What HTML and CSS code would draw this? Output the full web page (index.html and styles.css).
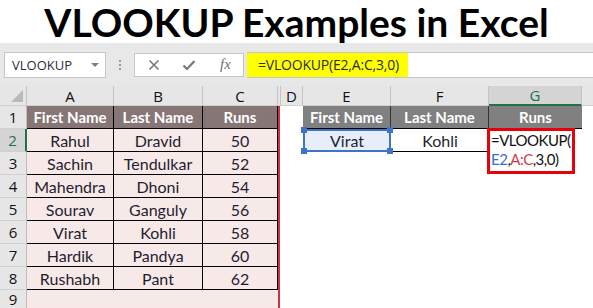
FILE: index.html
```html
<!DOCTYPE html>
<html lang="en">
<head>
    <meta charset="UTF-8">
    <title>VLOOKUP Examples in Excel</title>
    <link rel="stylesheet" href="styles.css">
</head>
<body>
    <h1 class="title">VLOOKUP Examples in Excel</h1>

    <!-- Formula bar -->
    <div class="formula-bar">
        <div class="namebox">
            <span class="namebox-text">VLOOKUP</span>
            <span class="namebox-arrow"></span>
        </div>
        <div class="grip"><span></span><span></span><span></span></div>
        <div class="fx-buttons">
            <svg class="fx-icon" width="12" height="12" viewBox="0 0 12 12">
                <path d="M1.5 1.5 L10.5 10.5 M10.5 1.5 L1.5 10.5" stroke="#777" stroke-width="1.6" fill="none"/>
            </svg>
            <svg class="fx-icon" width="14" height="12" viewBox="0 0 14 12">
                <path d="M1.5 6.5 L5 10 L12.5 2" stroke="#777" stroke-width="2.2" fill="none"/>
            </svg>
            <span class="fx-label">fx</span>
        </div>
        <div class="formula-input">
            <span class="formula-text">=VLOOKUP(E2,A:C,3,0)</span>
        </div>
    </div>

    <!-- Worksheet -->
    <div class="sheet">
        <div class="print-line"></div>
        <div class="blank"></div>

        <div class="ch corner"><span class="corner-tri"></span></div>
        <div class="ch">A</div>
        <div class="ch">B</div>
        <div class="ch">C</div>
        <div class="ch"></div>
        <div class="ch">D</div>
        <div class="ch">E</div>
        <div class="ch">F</div>
        <div class="ch active">G</div>
        <div class="ch end"></div>

        <div class="rh">1</div>
        <div class="cell th">First Name</div>
        <div class="cell th">Last Name</div>
        <div class="cell th">Runs</div>
        <div class="free"></div>
        <div class="cell th2">First Name</div>
        <div class="cell th2">Last Name</div>
        <div class="cell th2 last">Runs</div>
        <div class="free"></div>

        <div class="rh active">2</div>
        <div class="cell">Rahul</div>
        <div class="cell">Dravid</div>
        <div class="cell">50</div>
        <div class="free"></div>
        <div class="free lookup">Virat
            <span class="handle tl"></span><span class="handle tr"></span>
            <span class="handle bl"></span><span class="handle br"></span>
        </div>
        <div class="free result">Kohli</div>
        <div class="free editing">
            <div class="editor">=VLOOKUP(<br><span class="ref-e">E2</span>,<span class="ref-a">A:C</span>,3,0)</div>
        </div>
        <div class="free"></div>

        <div class="rh">3</div>
        <div class="cell">Sachin</div>
        <div class="cell">Tendulkar</div>
        <div class="cell">52</div>

        <div class="rh">4</div>
        <div class="cell">Mahendra</div>
        <div class="cell">Dhoni</div>
        <div class="cell">54</div>

        <div class="rh">5</div>
        <div class="cell">Sourav</div>
        <div class="cell">Ganguly</div>
        <div class="cell">56</div>

        <div class="rh">6</div>
        <div class="cell">Virat</div>
        <div class="cell">Kohli</div>
        <div class="cell">58</div>

        <div class="rh">7</div>
        <div class="cell">Hardik</div>
        <div class="cell">Pandya</div>
        <div class="cell">60</div>

        <div class="rh">8</div>
        <div class="cell">Rushabh</div>
        <div class="cell">Pant</div>
        <div class="cell">62</div>

        <div class="rh last">9</div>
        <div class="pink-rest"></div>
    </div>
</body>
</html>
```

FILE: styles.css
```css
* {
    box-sizing: border-box;
}

body {
    margin: 0;
    width: 593px;
    height: 308px;
    overflow: hidden;
    background: #fff;
    font-family: "Open Sans", sans-serif;
}

.title {
    margin: 0;
    height: 43px;
    padding-top: 2px;
    line-height: 41px;
    text-align: center;
    font-family: Lato, sans-serif;
    font-weight: 700;
    font-size: 39px;
    color: #000;
}

/* formula bar */
.formula-bar {
    height: 43px;
    background: #e8e8e8;
    display: flex;
    align-items: center;
    padding-left: 4px;
}

.namebox {
    width: 102px;
    height: 26px;
    background: #fff;
    border: 1px solid #c6c6c6;
    display: flex;
    align-items: center;
    justify-content: space-between;
    padding: 0 6px 0 7px;
}

.namebox-text {
    font-size: 13px;
    color: #2b2b3a;
}

.namebox-arrow {
    width: 0;
    height: 0;
    border-left: 4px solid transparent;
    border-right: 4px solid transparent;
    border-top: 4px solid #808080;
}

.grip {
    margin-left: 13px;
    display: flex;
    flex-direction: column;
    gap: 2px;
}

.grip span {
    width: 2px;
    height: 2px;
    background: #9a9a9a;
}

.fx-buttons {
    margin-left: 13px;
    width: 110px;
    height: 24px;
    background: #fff;
    border: 1px solid #c6c6c6;
    display: flex;
    align-items: center;
    padding-left: 13px;
    gap: 22px;
}

.fx-label {
    font-family: "Liberation Serif", serif;
    font-style: italic;
    font-size: 15px;
    color: #707070;
    margin-left: 2px;
}

.formula-input {
    margin-left: 3px;
    flex: 1;
    height: 26px;
    background: #fff;
    border-top: 1px solid #c6c6c6;
    border-bottom: 1px solid #c6c6c6;
    display: flex;
    align-items: center;
}

.formula-text {
    width: 161px;
    height: 24px;
    line-height: 24px;
    background: #ffff00;
    padding-left: 11px;
    font-size: 14px;
    letter-spacing: -0.2px;
    color: #2b2b3a;
}

/* worksheet */
.sheet {
    display: grid;
    grid-template-columns: 27px 87px 89px 75px 3px 22px 88px 98px 93px 1fr;
    grid-template-rows: 20px repeat(8, 23px) 1fr;
    height: 222px;
    font-family: Lato, sans-serif;
    font-size: 16px;
    color: #1e1e30;
}

.ch {
    background: #e6e6e6;
    border-right: 1px solid #c4c4c4;
    border-bottom: 1px solid #d0d0d0;
    display: flex;
    align-items: center;
    justify-content: center;
    font-family: "Open Sans", sans-serif;
    font-size: 15px;
    color: #111;
}

.ch.end {
    border-right: 0;
}

.ch.active {
    background: #d4d4d4;
    color: #217346;
    border-bottom: 2px solid #217346;
}

.corner {
    position: relative;
}

.corner-tri {
    position: absolute;
    right: 3px;
    bottom: 3px;
    width: 0;
    height: 0;
    border-left: 12px solid transparent;
    border-bottom: 12px solid #b9b9b9;
}

.rh {
    background: #e6e6e6;
    border-right: 1px solid #bdbdbd;
    border-bottom: 1px solid #d0d0d0;
    display: flex;
    align-items: center;
    justify-content: center;
    font-family: "Open Sans", sans-serif;
    font-size: 15px;
    color: #111;
}

.rh.last {
    align-items: flex-start;
    line-height: 18px;
    border-bottom: 0;
}

.rh.active {
    background: #d4d4d4;
    color: #217346;
    border-right: 2px solid #217346;
}

.cell {
    background: #f8e9e9;
    border-right: 1px solid #000;
    border-bottom: 1px solid #000;
    display: flex;
    align-items: center;
    justify-content: center;
}

.cell.th {
    background: #867776;
    color: #fff;
    font-weight: 700;
    font-size: 15px;
}

.cell.th2 {
    background: #808080;
    color: #fff;
    font-weight: 700;
    font-size: 15px;
    border-right-color: #333;
}

.cell.th2.last {
    border-right: 0;
}

.print-line {
    grid-column: 5;
    grid-row: 2 / -1;
    background: #fff;
    border-left: 2px solid #cc3340;
}

.blank {
    grid-column: 6 / -1;
    grid-row: 4 / -1;
}

.pink-rest {
    grid-column: 2 / 5;
    background: #f8e9e9;
}

.free {
    display: flex;
    align-items: center;
    justify-content: center;
}

.lookup {
    position: relative;
    background: #e7eef9;
    border: 2px solid #3d74c6;
}

.handle {
    position: absolute;
    width: 6px;
    height: 6px;
    background: #3d74c6;
}

.handle.tl { left: -4px; top: -4px; }
.handle.tr { right: -4px; top: -4px; }
.handle.bl { left: -4px; bottom: -4px; }
.handle.br { right: -4px; bottom: -4px; }

.result {
    border-bottom: 1px solid #000;
}

.editing {
    position: relative;
}

.editor {
    position: absolute;
    left: -2px;
    top: -1px;
    width: 88px;
    height: 46px;
    border: 3px solid #e8000b;
    background: #fff;
    padding: 0 0 0 1px;
    line-height: 19px;
    font-size: 15px;
    letter-spacing: -0.5px;
    color: #111;
    white-space: nowrap;
    overflow: hidden;
}

.ref-e {
    color: #3a6fc8;
}

.ref-a {
    color: #d23a4a;
}
```
